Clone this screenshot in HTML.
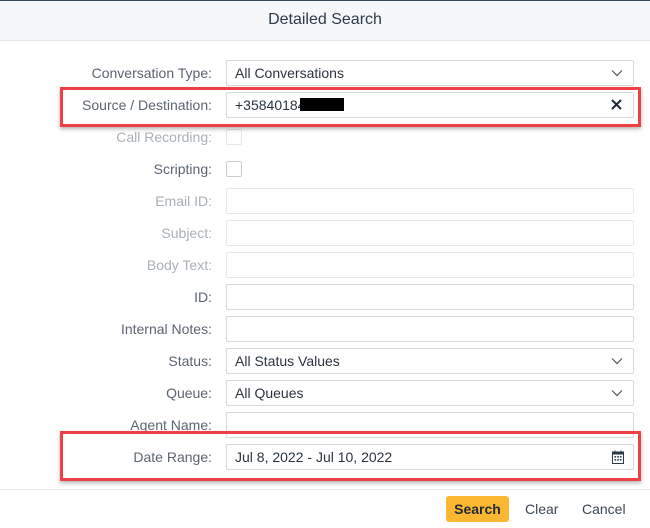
<!DOCTYPE html>
<html><head><meta charset="utf-8"><style>
*{box-sizing:border-box;margin:0;padding:0}
body{width:650px;height:528px;background:#fff;font-family:"Liberation Sans",sans-serif;position:relative;overflow:hidden}
.hdr{position:absolute;left:0;top:0;width:650px;height:41px;background:#f6f7f8;border-bottom:1px solid #e6e8ea;text-align:center;line-height:40px;font-size:16px;color:#2d3b4a}
.top{position:absolute;left:0;top:0;width:650px;height:1px;background:#2f4a5c}
.lab{position:absolute;right:438px;font-size:14px;color:#5b6570;height:26px;line-height:26px;white-space:nowrap}
.lab.d{color:#a9b0b7}
.in{position:absolute;left:226px;width:408px;height:26px;border:1px solid #d6dadd;border-radius:2px;font-size:14px;color:#2a3440;line-height:24px;padding-left:8px}
.in.d{border-color:#e7e9eb}
.cb{position:absolute;left:226px;width:16px;height:16px;border:1px solid #c9ced2;border-radius:2px}
.cb.d{border-color:#e4e7e9}
.chev{position:absolute;right:10px;top:8px}
.red{position:absolute;left:60px;width:581px;border:3px solid #ee4045;box-shadow:0 2px 4px rgba(0,0,0,.3)}
.ft{position:absolute;left:0;top:489px;width:650px;height:1px;background:#e6e8ea}
.btn{position:absolute;top:496px;height:26px;line-height:26px;font-size:14px;color:#3a4654}
</style></head><body>
<div class="hdr">Detailed Search</div>
<div class="top"></div>

<div class="lab" style="top:60px">Conversation Type:</div>
<div class="in" style="top:60px">All Conversations<svg class="chev" width="12" height="8" viewBox="0 0 12 8"><path d="M1 1.5l5 5 5-5" fill="none" stroke="#555" stroke-width="1.2"/></svg></div>

<div class="lab" style="top:92px">Source / Destination:</div>
<div class="in" style="top:92px">+35840184<span style="display:inline-block;width:44px;height:13px;background:#000;vertical-align:-1px;margin-left:-5px"></span><svg class="chev" style="top:6px;right:11px" width="11" height="11" viewBox="0 0 11 11"><path d="M1 1l9 9M10 1l-9 9" stroke="#1f2a36" stroke-width="2"/></svg></div>

<div class="lab d" style="top:124px">Call Recording:</div>
<div class="cb d" style="top:129px"></div>
<div class="lab" style="top:156px">Scripting:</div>
<div class="cb" style="top:161px"></div>

<div class="lab d" style="top:188px">Email ID:</div><div class="in d" style="top:188px"></div>
<div class="lab d" style="top:220px">Subject:</div><div class="in d" style="top:220px"></div>
<div class="lab d" style="top:252px">Body Text:</div><div class="in d" style="top:252px"></div>
<div class="lab" style="top:284px">ID:</div><div class="in" style="top:284px"></div>
<div class="lab" style="top:316px">Internal Notes:</div><div class="in" style="top:316px"></div>
<div class="lab" style="top:348px">Status:</div>
<div class="in" style="top:348px">All Status Values<svg class="chev" width="12" height="8" viewBox="0 0 12 8"><path d="M1 1.5l5 5 5-5" fill="none" stroke="#555" stroke-width="1.2"/></svg></div>
<div class="lab" style="top:380px">Queue:</div>
<div class="in" style="top:380px">All Queues<svg class="chev" width="12" height="8" viewBox="0 0 12 8"><path d="M1 1.5l5 5 5-5" fill="none" stroke="#555" stroke-width="1.2"/></svg></div>
<div class="lab" style="top:412px">Agent Name:</div><div class="in" style="top:412px"></div>
<div class="lab" style="top:444px">Date Range:</div>
<div class="in" style="top:444px">Jul 8, 2022 - Jul 10, 2022<svg class="chev" style="top:5px;right:9px" width="12" height="14" viewBox="0 0 12 14"><rect x="0.5" y="2" width="11" height="11.5" fill="none" stroke="#2a3a4c"/><rect x="0.5" y="2" width="11" height="2.5" fill="#2a3a4c"/><path d="M3 0.5v2M9 0.5v2" stroke="#2a3a4c"/><g fill="#2a3a4c"><rect x="2.5" y="6" width="1.6" height="1.6"/><rect x="5.2" y="6" width="1.6" height="1.6"/><rect x="7.9" y="6" width="1.6" height="1.6"/><rect x="2.5" y="9" width="1.6" height="1.6"/><rect x="5.2" y="9" width="1.6" height="1.6"/><rect x="7.9" y="9" width="1.6" height="1.6"/></g></svg></div>

<div class="red" style="top:87px;height:40px"></div>
<div class="red" style="top:431px;height:50px"></div>

<div class="ft"></div>
<div class="btn" style="left:446px;width:63px;background:#fbb731;border-radius:3px;text-align:center;font-weight:bold;color:#1e2a38">Search</div>
<div class="btn" style="left:525px">Clear</div>
<div class="btn" style="left:582px">Cancel</div>
</body></html>
